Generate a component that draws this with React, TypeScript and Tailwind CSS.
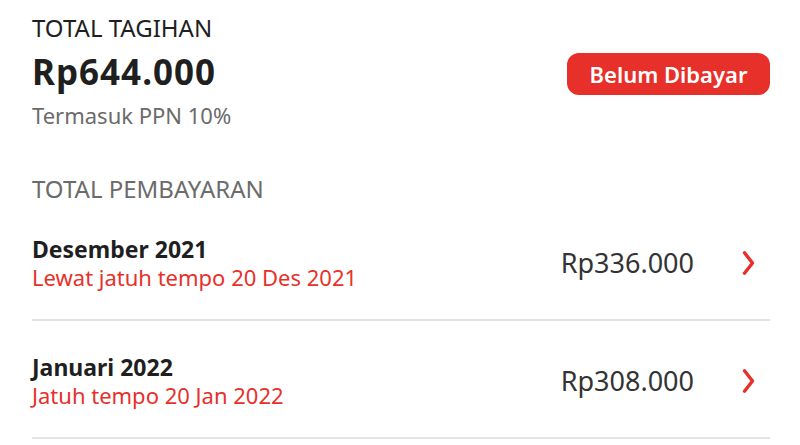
const bills = [
  { month: "Desember 2021", due: "Lewat jatuh tempo 20 Des 2021", amount: "Rp336.000" },
  { month: "Januari 2022", due: "Jatuh tempo 20 Jan 2022", amount: "Rp308.000" },
];

function Chevron() {
  return (
    <svg width="13" height="24" viewBox="0 0 13 24" fill="none" className="shrink-0">
      <path d="M2.5 1.8 L10.5 12 L2.5 22.2" stroke="#e8302a" strokeWidth="3.4" strokeLinecap="round" strokeLinejoin="round" />
    </svg>
  );
}

export default function App() {
  return (
    <div className="w-[800px] h-[445px] overflow-hidden bg-white pl-8 pr-[30px] font-['Noto_Sans',sans-serif]">
      {/* ringkasan tagihan */}
      <div className="flex justify-between items-start pt-[14px]">
        <div>
          <p className="text-[24px] leading-[28px] text-[#1f1f1f]">TOTAL TAGIHAN</p>
          <p className="mt-[10px] text-[35px] leading-[40px] font-bold tracking-[1px] text-[#1f1f1f]">Rp644.000</p>
          <p className="mt-[9px] text-[22px] leading-[28px] text-[#6b6b6b]">Termasuk PPN 10%</p>
        </div>
        <button className="mt-[39px] w-[203px] h-[42px] rounded-[12px] bg-[#e8302a] text-white text-[22px] leading-none font-semibold">
          Belum Dibayar
        </button>
      </div>

      <p className="mt-[46px] text-[24px] leading-[28px] text-[#6b6b6b]">TOTAL PEMBAYARAN</p>

      {/* daftar pembayaran */}
      <div>
        {bills.map((b) => (
          <div key={b.month} className="flex items-center justify-between pt-[32px] pb-[28px] border-b-2 border-[#e3e3e3]">
            <div>
              <p className="text-[23px] leading-[28px] font-bold text-[#1f1f1f]">{b.month}</p>
              <p className="text-[22px] leading-[28px] text-[#e8302a]">{b.due}</p>
            </div>
            <div className="flex items-center gap-[48px] pr-[15px]">
              <span className="text-[27px] text-[#333]">{b.amount}</span>
              <Chevron />
            </div>
          </div>
        ))}
      </div>
    </div>
  );
}
